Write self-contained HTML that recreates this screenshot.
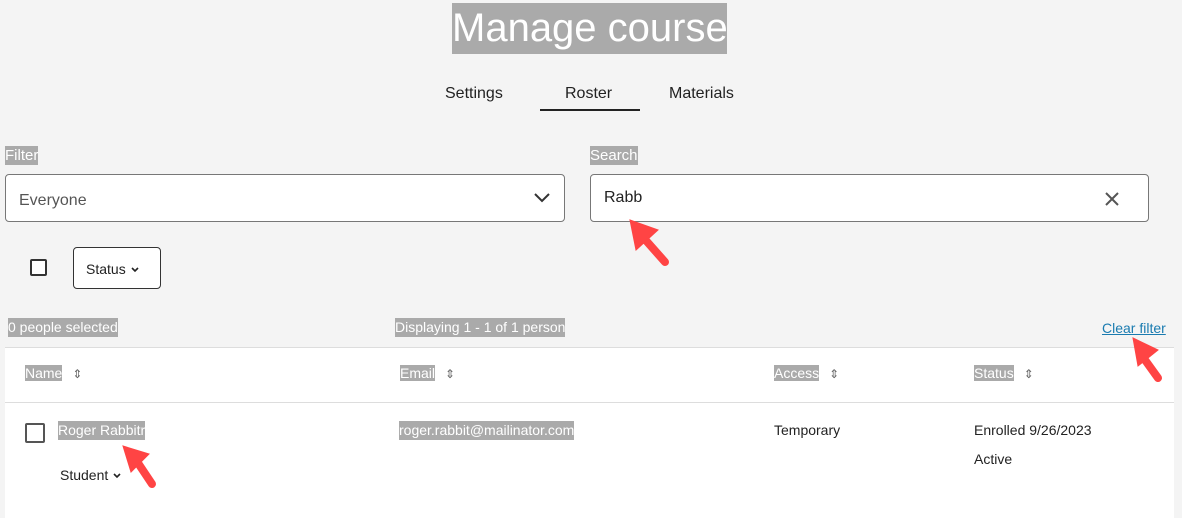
<!DOCTYPE html><html><head><style>
body{margin:0;width:1182px;height:506px;background:#f4f4f4;font-family:"Liberation Sans",sans-serif;position:relative;overflow:hidden;color:#222}
.a{position:absolute;white-space:nowrap}
.hl{background:#aaa;color:#fff}
.box{position:absolute;background:#fff;border:1px solid #777;border-radius:4px;box-sizing:border-box}
.cb{position:absolute;width:17px;height:17px;border:2px solid #333;border-radius:2px;box-sizing:border-box;background:#fff}
.s{color:#666;font-size:12px;margin-left:10px}
</style></head><body>
<div class="a hl" style="left:452px;top:3px;height:51px;width:275px;font-size:40px;line-height:51px;text-align:center;overflow:hidden">Manage course</div>
<div class="a" style="left:445px;top:85px;font-size:16px">Settings</div>
<div class="a" style="left:565px;top:85px;font-size:16px">Roster</div>
<div class="a" style="left:540px;top:109px;width:100px;height:2px;background:#222"></div>
<div class="a" style="left:669px;top:85px;font-size:16px">Materials</div>
<div class="a hl" style="left:5px;top:146px;font-size:15px;line-height:19px">Filter</div>
<div class="a hl" style="left:590px;top:146px;font-size:15px;line-height:19px">Search</div>
<div class="box" style="left:5px;top:174px;width:560px;height:48px"></div>
<div class="a" style="left:19px;top:192px;font-size:16px;color:#555">Everyone</div>
<svg class="a" style="left:533px;top:192px" width="18" height="12"><path d="M2 2l7 7 7-7" stroke="#333" stroke-width="2" fill="none"/></svg>
<div class="box" style="left:590px;top:174px;width:559px;height:48px"></div>
<div class="a" style="left:604px;top:189px;font-size:16px">Rabb</div>
<svg class="a" style="left:1104px;top:191px" width="16" height="16"><path d="M2 2l12 12M14 2L2 14" stroke="#555" stroke-width="2"/></svg>
<div class="cb" style="left:30px;top:259px"></div>
<div class="box" style="left:73px;top:247px;width:88px;height:42px;border-color:#333"></div>
<div class="a" style="left:86px;top:261px;font-size:14px">Status <svg width="10" height="8"><path d="M2 2l3 3 3-3" stroke="#222" stroke-width="1.6" fill="none"/></svg></div>
<div class="a hl" style="left:8px;top:318px;font-size:14px;line-height:19px">0 people selected</div>
<div class="a hl" style="left:395px;top:318px;font-size:14px;line-height:19px">Displaying 1 - 1 of 1 person</div>
<div class="a" style="left:1102px;top:320px;font-size:14px;color:#1a7bb0;text-decoration:underline">Clear filter</div>
<div class="a" style="left:5px;top:347px;width:1169px;height:170px;background:#fff;border-top:1px solid #ddd"></div>
<div class="a" style="left:5px;top:402px;width:1169px;height:1px;background:#ddd"></div>
<div class="a" style="left:25px;top:365px;font-size:14px"><span class="hl">Name</span><span class="s">&#8661;</span></div>
<div class="a" style="left:400px;top:365px;font-size:14px"><span class="hl">Email</span><span class="s">&#8661;</span></div>
<div class="a" style="left:774px;top:365px;font-size:14px"><span class="hl">Access</span><span class="s">&#8661;</span></div>
<div class="a" style="left:974px;top:365px;font-size:14px"><span class="hl">Status</span><span class="s">&#8661;</span></div>
<div class="cb" style="left:25px;top:423px;border-color:#555;width:20px;height:20px"></div>
<div class="a hl" style="left:58px;top:421px;font-size:14px;line-height:19px">Roger Rabbitr</div>
<div class="a" style="left:60px;top:467px;font-size:14px">Student <svg width="10" height="8"><path d="M2 2l3 3 3-3" stroke="#222" stroke-width="1.6" fill="none"/></svg></div>
<div class="a hl" style="left:399px;top:421px;font-size:14px;line-height:19px">roger.rabbit@mailinator.com</div>
<div class="a" style="left:774px;top:421px;font-size:14px;line-height:19px">Temporary</div>
<div class="a" style="left:974px;top:421px;font-size:14px;line-height:19px">Enrolled 9/26/2023</div>
<div class="a" style="left:974px;top:450px;font-size:14px;line-height:19px">Active</div>
<svg class="a" style="left:0;top:0" width="1182" height="506">
<g fill="#f44" stroke="#f44" stroke-width="8" stroke-linecap="round">
<path d="M665 262L642 236" /><polygon points="630,220 658,230 636,250" stroke-width="1"/>
<path d="M1158 378L1140 353"/><polygon points="1133,338 1158,350 1138,366" stroke-width="1"/>
<path d="M152 484L136 460"/><polygon points="123,446 149,454 131,472" stroke-width="1"/>
</g></svg>
</body></html>
